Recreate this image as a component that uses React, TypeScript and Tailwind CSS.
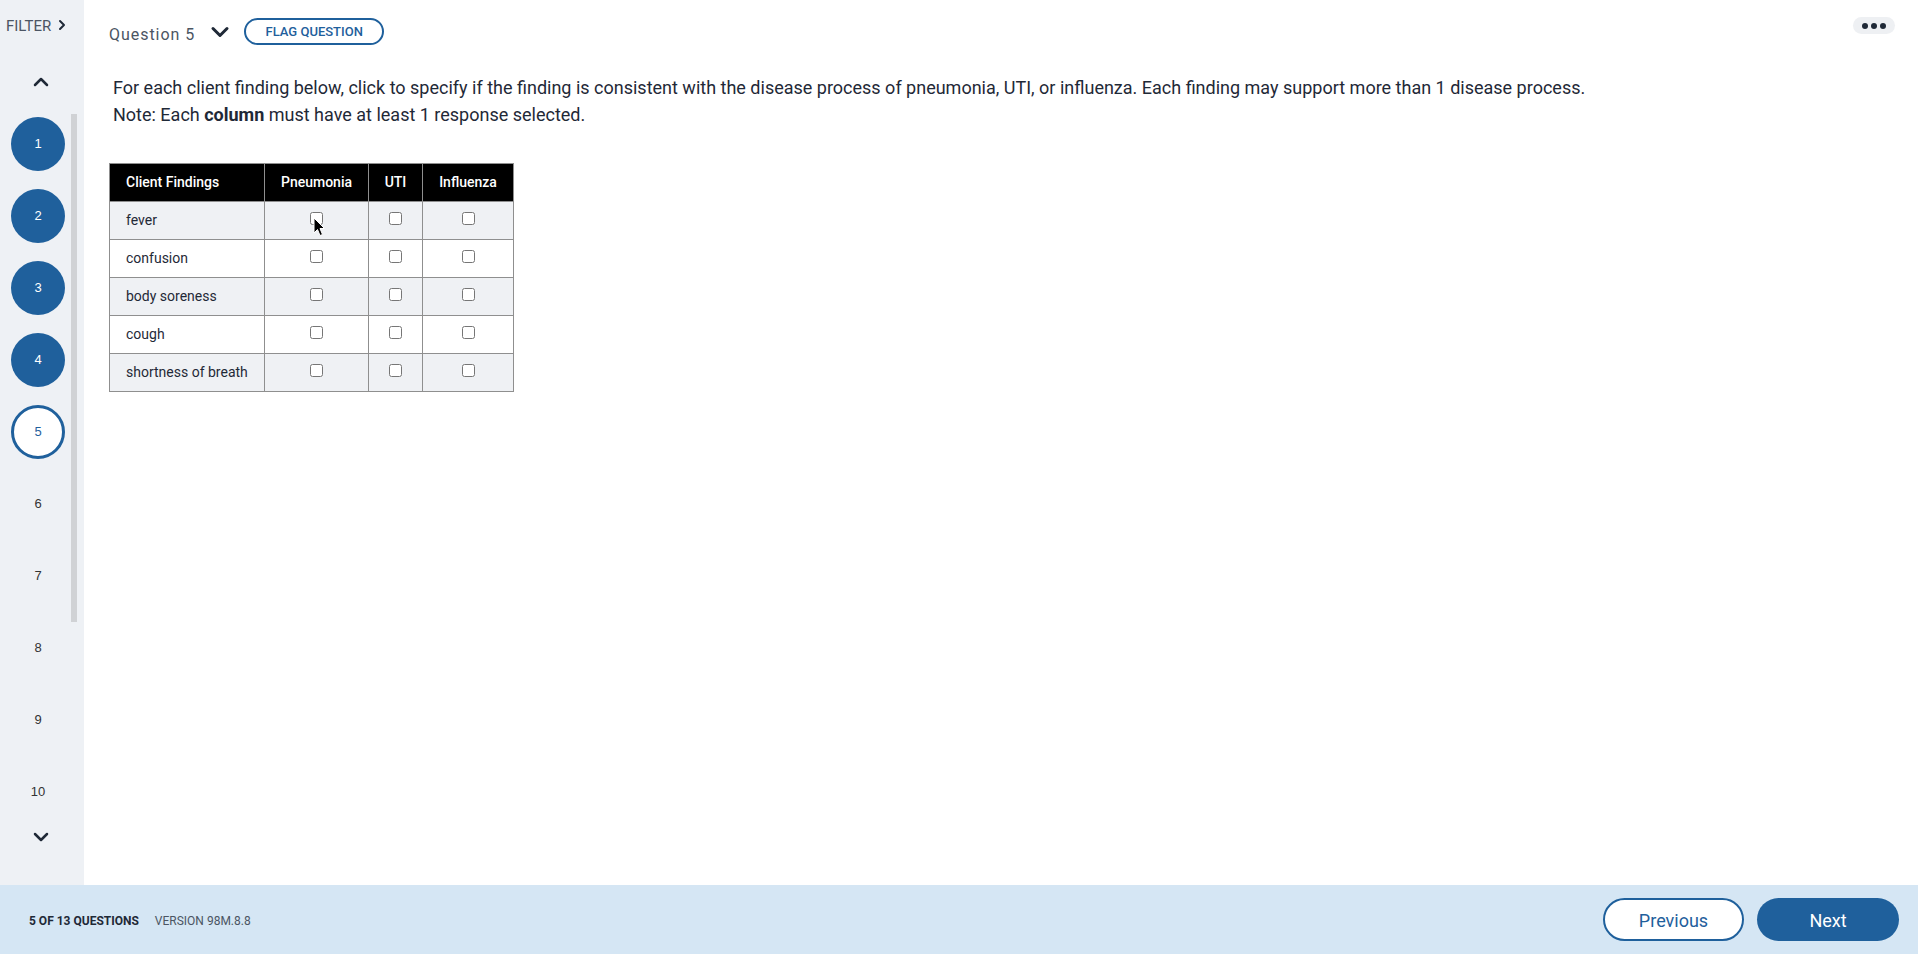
import { ChevronDown, ChevronRight, ChevronUp } from 'lucide-react'

const findings = ['fever', 'confusion', 'body soreness', 'cough', 'shortness of breath']
const diseases = ['Pneumonia', 'UTI', 'Influenza']
const questions = [1, 2, 3, 4, 5, 6, 7, 8, 9, 10]

function Sidebar() {
	return (
		<aside className="relative w-[84px] shrink-0 bg-[#eef1f5] flex flex-col">
			<div className="h-[50px] flex items-center pl-[6px] pt-[2px] text-[15px] text-[#4b5563]">
				<span>FILTER</span>
				<ChevronRight size={16} strokeWidth={3} className="ml-[3px] -mt-[2px] text-[#1f2937]" />
			</div>

			<div className="h-[58px] pt-[6px] pl-[29px] flex items-center">
				<ChevronUp size={24} strokeWidth={2.5} className="text-[#1f2937]" />
			</div>

			<div className="h-[712px] overflow-hidden pl-[11px]">
				{questions.map((n) => {
					const answered = n < 5
					const current = n === 5
					return (
						<div key={n} className="h-[72px] flex items-center">
							<div
								className={`w-[54px] h-[54px] rounded-full flex items-center justify-center text-[13px] font-['Liberation_Sans',Arial,sans-serif] ${answered
									? 'bg-[#1f609c] text-white'
									: current
										? 'bg-white border-[3px] border-[#1f609c] text-[#1f609c]'
										: 'text-[#333]'
									}`}
							>
								{n}
							</div>
						</div>
					)
				})}
			</div>

			<div className="h-[34px] pl-[29px] flex items-center">
				<ChevronDown size={24} strokeWidth={2.5} className="text-[#1f2937]" />
			</div>

			{/* scroll thumb */}
			<div className="absolute left-[71px] top-[114px] w-[6px] h-[508px] bg-[#d0d2d5]" />
		</aside>
	)
}

function Cursor() {
	return (
		<svg width="13" height="20" viewBox="0 0 13 20" className="absolute left-[48px] top-[15px] pointer-events-none">
			<path d="M1 1 L1 16 L4.5 12.5 L7 18.5 L9.5 17.5 L7 11.5 L11.5 11.5 Z" fill="#000" stroke="#fff" strokeWidth="1" strokeLinejoin="round" />
		</svg>
	)
}

function FindingsTable() {
	return (
		<table className="table-fixed border-collapse w-[404px] text-[14px] text-[#1f2937]">
			<colgroup>
				<col className="w-[155px]" />
				<col className="w-[104px]" />
				<col className="w-[54px]" />
				<col className="w-[91px]" />
			</colgroup>
			<thead>
				<tr className="h-[38px] bg-black text-white">
					<th className="border border-[#8f8f8f] text-left pl-[16px] font-medium">Client Findings</th>
					{diseases.map((d) => (
						<th key={d} className="border border-[#8f8f8f] text-center font-medium">{d}</th>
					))}
				</tr>
			</thead>
			<tbody>
				{findings.map((f, i) => (
					<tr key={f} className={i % 2 === 0 ? 'bg-[#eff1f4]' : 'bg-white'}>
						<td className="border border-[#8f8f8f] pl-[16px] h-[38px]">{f}</td>
						{diseases.map((d) => (
							<td key={d} className="relative border border-[#8f8f8f] text-center">
								<input type="checkbox" className="align-middle -mt-[6px]" />
								{i === 0 && d === 'Pneumonia' && <Cursor />}
							</td>
						))}
					</tr>
				))}
			</tbody>
		</table>
	)
}

export default function App() {
	return (
		<div className="h-[954px] w-full flex flex-col font-['Roboto',sans-serif] bg-white overflow-hidden">
			<div className="flex flex-1 min-h-0">
				<Sidebar />

				<main className="flex-1 pl-[25px] pr-[23px]">
					<div className="flex items-start pt-[18px]">
						<div className="flex items-center h-[27px]">
							<span className="text-[16px] tracking-[0.06em] text-[#4b5563] mt-[6px]">Question 5</span>
							<ChevronDown size={28} strokeWidth={2.6} className="ml-[11px] mt-[1px] text-[#1f2937]" />
							<button className="ml-[10px] w-[140px] h-[27px] rounded-full border-2 border-[#1f609c] text-[#1f609c] text-[13px] font-medium flex items-center justify-center">
								FLAG QUESTION
							</button>
						</div>
						<button className="ml-auto -mt-[1px] w-[42px] h-[17px] rounded-full bg-[#eef0f3] flex items-center justify-center gap-[3px]">
							<span className="w-[6px] h-[6px] rounded-full bg-[#1f2937]" />
							<span className="w-[6px] h-[6px] rounded-full bg-[#1f2937]" />
							<span className="w-[6px] h-[6px] rounded-full bg-[#1f2937]" />
						</button>
					</div>

					<div className="mt-[29px] pl-[4px] text-[18px] leading-[27px] text-[#1f2937]">
						<p>For each client finding below, click to specify if the finding is consistent with the disease process of pneumonia, UTI, or influenza. Each finding may support more than 1 disease process.</p>
						<p>Note: Each <b className="font-bold">column</b> must have at least 1 response selected.</p>
					</div>

					<div className="mt-[35px]">
						<FindingsTable />
					</div>
				</main>
			</div>

			<footer className="h-[69px] shrink-0 bg-[#d5e6f4] flex items-center pl-[29px] pr-[19px] pt-[2px]">
				<span className="text-[12px] font-bold text-[#1f2937]">5 OF 13 QUESTIONS</span>
				<span className="ml-[16px] text-[12px] text-[#4b5563]">VERSION 98M.8.8</span>
				<div className="ml-auto flex items-center gap-[13px] -mt-[2px]">
					<button className="w-[141px] h-[43px] rounded-full border-2 border-[#1f609c] bg-white text-[#1f609c] text-[18px] pt-[2px]">Previous</button>
					<button className="w-[142px] h-[43px] rounded-full bg-[#1f609c] text-white text-[18px] pt-[2px]">Next</button>
				</div>
			</footer>
		</div>
	)
}
